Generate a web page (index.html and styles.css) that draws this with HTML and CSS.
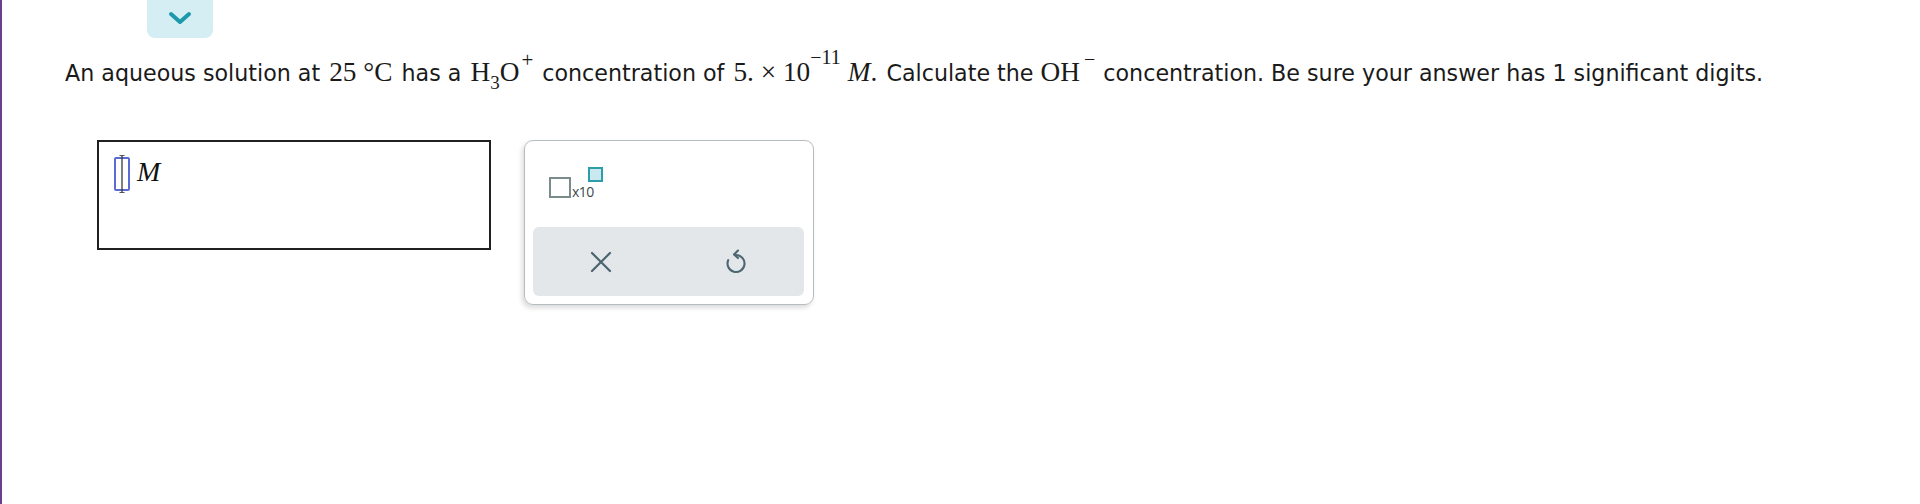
FILE: index.html
```html
<!DOCTYPE html>
<html lang="en">
<head>
<meta charset="utf-8">
<title>Question</title>
<link rel="stylesheet" href="styles.css">
</head>
<body>
<div class="page">
  <div class="tab-row">
    <div class="tab">
      <svg class="chev" width="26" height="16" viewBox="0 0 26 16"><polyline points="4,4 13,12 22,4" fill="none" stroke="#1c9aac" stroke-width="4" stroke-linecap="round" stroke-linejoin="round"/></svg>
    </div>
  </div>
  <p class="question">An aqueous solution at <span class="m">25&nbsp;°C</span> has a <span class="m">H<span class="sub">3</span>O<span class="sup">+</span></span> concentration of <span class="m">5.&nbsp;×&nbsp;10<span class="exp">−11</span><i class="mi">M</i>.</span> Calculate the <span class="m oh">OH<span class="sup2">−</span></span> concentration. Be sure your answer has 1 significant digits.</p>
  <div class="answer-row">
    <div class="answer-box">
      <svg class="cursor" width="18" height="40" viewBox="0 0 18 40">
        <rect x="2" y="4" width="14" height="32" rx="1" fill="none" stroke="#5b6bd6" stroke-width="2"/>
        <line x1="9" y1="1.5" x2="9" y2="38.5" stroke="#3a3a3a" stroke-width="1.3"/>
        <line x1="6.5" y1="1.5" x2="11.5" y2="1.5" stroke="#555" stroke-width="1"/>
        <line x1="6.5" y1="38.5" x2="11.5" y2="38.5" stroke="#555" stroke-width="1"/>
      </svg>
      <i class="unit">M</i>
    </div>
    <div class="keypad">
      <div class="keys-top">
        <div class="x10">
          <span class="big-sq"></span><span class="x10-txt">x10</span><span class="small-sq"></span>
        </div>
      </div>
      <div class="keys-bottom">
        <div class="key">
          <svg class="ico" width="22" height="22" viewBox="0 0 22 22"><path d="M2 2 L20 20 M20 2 L2 20" stroke="#4c6670" stroke-width="2.2" stroke-linecap="round" fill="none"/></svg>
        </div>
        <div class="key">
          <svg class="ico" width="24" height="28" viewBox="0 0 24 28"><path d="M12 7 A8.5 8.5 0 1 1 4.2 12.2" fill="none" stroke="#4c6670" stroke-width="2.1" stroke-linecap="round"/><path d="M14 2.5 L10 6.5 L14 10" fill="none" stroke="#4c6670" stroke-width="2.1" stroke-linecap="round" stroke-linejoin="round"/></svg>
        </div>
      </div>
    </div>
  </div>
</div>
</body>
</html>
```
FILE: styles.css
```css
html, body {
  margin: 0;
  padding: 0;
  background: #ffffff;
}
body {
  min-height: 504px;
  border-left: 2px solid #6c3f8e;
  box-sizing: border-box;
  font-family: "DejaVu Sans", Verdana, sans-serif;
  color: #1a1a1a;
}
.page {
  padding-left: 63px;
}
.tab-row {
  display: flex;
}
.tab {
  margin-left: 82px;
  margin-top: -8px;
  width: 66px;
  height: 46px;
  background: #d5eef3;
  border-radius: 8px;
  display: flex;
  align-items: center;
  justify-content: center;
  padding-top: 6px;
  box-sizing: border-box;
}
.chev {
  display: block;
}
.question {
  margin: 19px 0 0 0;
  font-size: 22.2px;
  line-height: 30px;
  white-space: nowrap;
}
.m {
  font-family: "Liberation Serif", "Times New Roman", serif;
  font-size: 27.3px;
  margin-left: 2px;
  margin-right: 2px;
}
.oh {
  margin-left: 0;
  margin-right: 0;
}
.sub {
  font-size: 19px;
  line-height: 0;
  vertical-align: -8px;
}
.sup {
  font-size: 21px;
  line-height: 0;
  vertical-align: 14px;
  margin-left: 2px;
}
.sup2 {
  font-size: 20px;
  line-height: 0;
  vertical-align: 15px;
  margin-left: 4px;
  margin-right: 1px;
}
.exp {
  font-size: 20px;
  line-height: 0;
  vertical-align: 17px;
}
.mi {
  margin-left: 7px;
}
.answer-row {
  display: flex;
  align-items: flex-start;
  margin-top: 52px;
  padding-left: 32px;
}
.answer-box {
  width: 394px;
  height: 110px;
  border: 2px solid #202020;
  box-sizing: border-box;
  display: flex;
  align-items: flex-start;
  padding: 12px 0 0 14px;
}
.cursor {
  display: block;
}
.unit {
  font-family: "Liberation Serif", "Times New Roman", serif;
  font-size: 28px;
  margin-left: 6px;
  margin-top: 2px;
  color: #111;
}
.keypad {
  margin-left: 33px;
  margin-top: 0;
  width: 290px;
  height: 165px;
  border: 1px solid #b6bdc1;
  border-radius: 9px;
  box-sizing: border-box;
  box-shadow: -2px 3px 5px rgba(0, 0, 0, 0.14);
  padding: 8px 9px 8px 8px;
  display: flex;
  flex-direction: column;
  justify-content: space-between;
}
.keys-top {
  padding: 18px 0 0 16px;
}
.x10 {
  display: flex;
  align-items: flex-start;
}
.big-sq {
  width: 22px;
  height: 21px;
  border: 2px solid #7b8a8d;
  box-sizing: border-box;
  margin-top: 10px;
}
.x10-txt {
  font-family: "Open Sans", "DejaVu Sans", sans-serif;
  font-size: 14px;
  color: #3d4a4e;
  margin-top: 15px;
  margin-left: 1px;
  letter-spacing: -0.6px;
}
.small-sq {
  width: 15px;
  height: 15px;
  border: 2px solid #2b9ea8;
  background: #c9e9ef;
  box-sizing: border-box;
  margin-left: -6px;
}
.keys-bottom {
  height: 69px;
  background: #e3e7ea;
  border-radius: 6px;
  display: grid;
  grid-template-columns: 1fr 1fr;
  align-items: center;
  justify-items: center;
}
.key {
  display: flex;
  align-items: center;
  justify-content: center;
}
.ico {
  display: block;
}
```
